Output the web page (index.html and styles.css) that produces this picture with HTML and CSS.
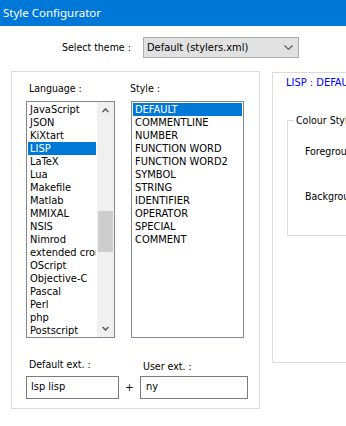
FILE: index.html
```html
<!DOCTYPE html>
<html>
<head>
<meta charset="utf-8">
<link rel="stylesheet" href="styles.css">
</head>
<body>
<div class="window">
  <div class="titlebar">Style Configurator</div>
  <div class="theme-row">
    <span class="label theme-label">Select theme :</span>
    <div class="dropdown">
      <span>Default (stylers.xml)</span>
      <svg class="chev" width="9" height="5" viewBox="0 0 9 5"><polyline points="0.5,0.5 4.5,4.3 8.5,0.5" fill="none" stroke="#505050" stroke-width="1.1"/></svg>
    </div>
  </div>
  <div class="content">
    <div class="group left-group">
      <div class="lists">
        <div class="col">
          <div class="label lang-label">Language :</div>
          <div class="listbox lang-list">
            <div class="items">
              <div class="item">JavaScript</div>
              <div class="item">JSON</div>
              <div class="item">KiXtart</div>
              <div class="item sel">LISP</div>
              <div class="item">LaTeX</div>
              <div class="item">Lua</div>
              <div class="item">Makefile</div>
              <div class="item">Matlab</div>
              <div class="item">MMIXAL</div>
              <div class="item">NSIS</div>
              <div class="item">Nimrod</div>
              <div class="item">extended crontab</div>
              <div class="item">OScript</div>
              <div class="item">Objective-C</div>
              <div class="item">Pascal</div>
              <div class="item">Perl</div>
              <div class="item">php</div>
              <div class="item">Postscript</div>
            </div>
            <div class="scrollbar">
              <div class="sb-btn"><svg width="7" height="5" viewBox="0 0 7 5"><polyline points="0.6,4 3.5,1 6.4,4" fill="none" stroke="#606060" stroke-width="1.6"/></svg></div>
              <div class="sb-track"><div class="thumb"></div></div>
              <div class="sb-btn"><svg width="7" height="5" viewBox="0 0 7 5"><polyline points="0.6,1 3.5,4 6.4,1" fill="none" stroke="#606060" stroke-width="1.6"/></svg></div>
            </div>
          </div>
        </div>
        <div class="col">
          <div class="label style-label">Style :</div>
          <div class="listbox style-list">
            <div class="items">
              <div class="item sel">DEFAULT</div>
              <div class="item">COMMENTLINE</div>
              <div class="item">NUMBER</div>
              <div class="item">FUNCTION WORD</div>
              <div class="item">FUNCTION WORD2</div>
              <div class="item">SYMBOL</div>
              <div class="item">STRING</div>
              <div class="item">IDENTIFIER</div>
              <div class="item">OPERATOR</div>
              <div class="item">SPECIAL</div>
              <div class="item">COMMENT</div>
            </div>
          </div>
        </div>
      </div>
      <div class="ext-row">
        <div class="ext-col">
          <div class="label ext-label">Default ext. :</div>
          <div class="input def-input">lsp lisp</div>
        </div>
        <div class="plus">+</div>
        <div class="ext-col">
          <div class="label ext-label user-label">User ext. :</div>
          <div class="input user-input">ny</div>
        </div>
      </div>
    </div>
    <div class="group right-panel">
      <div class="lang-title">LISP : DEFAULT</div>
      <fieldset class="colour-group">
        <legend class="label">Colour Style</legend>
        <div class="label color-row">Foreground colour</div>
        <div class="label color-row bg-row">Background colour</div>
      </fieldset>
    </div>
  </div>
</div>
</body>
</html>
```
FILE: styles.css
```css
html, body {
  margin: 0;
  padding: 0;
  background: #ffffff;
}
body {
  width: 346px;
  height: 426px;
  overflow: hidden;
  font-family: "DejaVu Sans Condensed", "DejaVu Sans", sans-serif;
  font-stretch: semi-condensed;
  color: #000;
}
.window {
  width: 346px;
  height: 426px;
  overflow: hidden;
}
.titlebar {
  height: 26px;
  line-height: 25px;
  background: #0078d7;
  color: #fff;
  font-family: "Noto Sans", "Open Sans", sans-serif;
  font-stretch: normal;
  font-size: 11.5px;
  padding-left: 3px;
}
.label {
  font-size: 10.5px;
  line-height: 13px;
  white-space: nowrap;
}
.theme-row {
  display: flex;
  align-items: center;
  margin-top: 11px;
  padding-left: 62px;
}
.theme-label {
  width: 81px;
}
.dropdown {
  box-sizing: border-box;
  width: 156px;
  height: 21px;
  background: #e1e1e1;
  border: 1px solid #adadad;
  display: flex;
  align-items: center;
  justify-content: space-between;
  padding: 0 5px 0 3px;
  font-size: 11px;
}
.chev {
  display: block;
}
.content {
  display: flex;
  margin-top: 13px;
  padding-left: 11px;
  align-items: flex-start;
}
.group {
  box-sizing: border-box;
  border: 1px solid #dcdcdc;
  flex-shrink: 0;
}
.left-group {
  width: 249px;
  height: 338px;
  padding: 10px 0 0 14px;
}
.lists {
  display: flex;
  gap: 16px;
}
.col {
  display: flex;
  flex-direction: column;
}
.lang-label {
  padding-left: 3px;
  margin-bottom: 6px;
}
.style-label {
  margin-left: -1px;
  margin-bottom: 6px;
}
.listbox {
  box-sizing: border-box;
  height: 237px;
  border: 1px solid #828790;
  display: flex;
  overflow: hidden;
  background: #fff;
}
.lang-list {
  width: 89px;
}
.style-list {
  width: 113px;
}
.items {
  flex: 1;
  min-width: 0;
  padding: 1px 1px 0 1px;
  overflow: hidden;
}
.item {
  font-size: 11px;
  line-height: 13px;
  height: 13px;
  padding-left: 2px;
  white-space: nowrap;
  overflow: hidden;
}
.item.sel {
  background: #0078d7;
  color: #fff;
}
.scrollbar {
  width: 17px;
  flex-shrink: 0;
  background: #f0f0f0;
  display: flex;
  flex-direction: column;
}
.sb-btn {
  height: 17px;
  display: flex;
  align-items: center;
  justify-content: center;
}
.sb-btn svg {
  display: block;
}
.sb-track {
  flex: 1;
}
.thumb {
  margin: 92px 1px 0 1px;
  height: 41px;
  background: #cdcdcd;
}
.ext-row {
  display: flex;
  align-items: flex-end;
  margin-top: 20px;
}
.ext-col {
  display: flex;
  flex-direction: column;
}
.ext-label {
  padding-left: 3px;
  margin-bottom: 5px;
}
.user-label {
  margin-bottom: 3px;
}
.input {
  box-sizing: border-box;
  height: 23px;
  border: 1px solid #7a7a7a;
  font-size: 11px;
  line-height: 20px;
  padding-left: 4px;
  white-space: nowrap;
}
.def-input {
  width: 93px;
}
.user-input {
  width: 108px;
  padding-left: 5px;
}
.plus {
  width: 21px;
  height: 23px;
  line-height: 23px;
  text-align: center;
  font-size: 11px;
}
.right-panel {
  margin-left: 12px;
  margin-top: 1px;
  width: 300px;
  height: 291px;
  padding: 3px 0 0 13px;
}
.lang-title {
  font-size: 11px;
  line-height: 13px;
  color: #0000ff;
  white-space: nowrap;
}
.colour-group {
  box-sizing: border-box;
  margin: 25px 0 0 1px;
  width: 260px;
  height: 122px;
  border: 1px solid #dcdcdc;
  padding: 0 0 0 6px;
  min-width: 0;
}
.colour-group legend {
  padding: 0 2px;
}
.color-row {
  margin-top: 18px;
  margin-left: 11px;
}
.bg-row {
  margin-top: 32px;
}
```
